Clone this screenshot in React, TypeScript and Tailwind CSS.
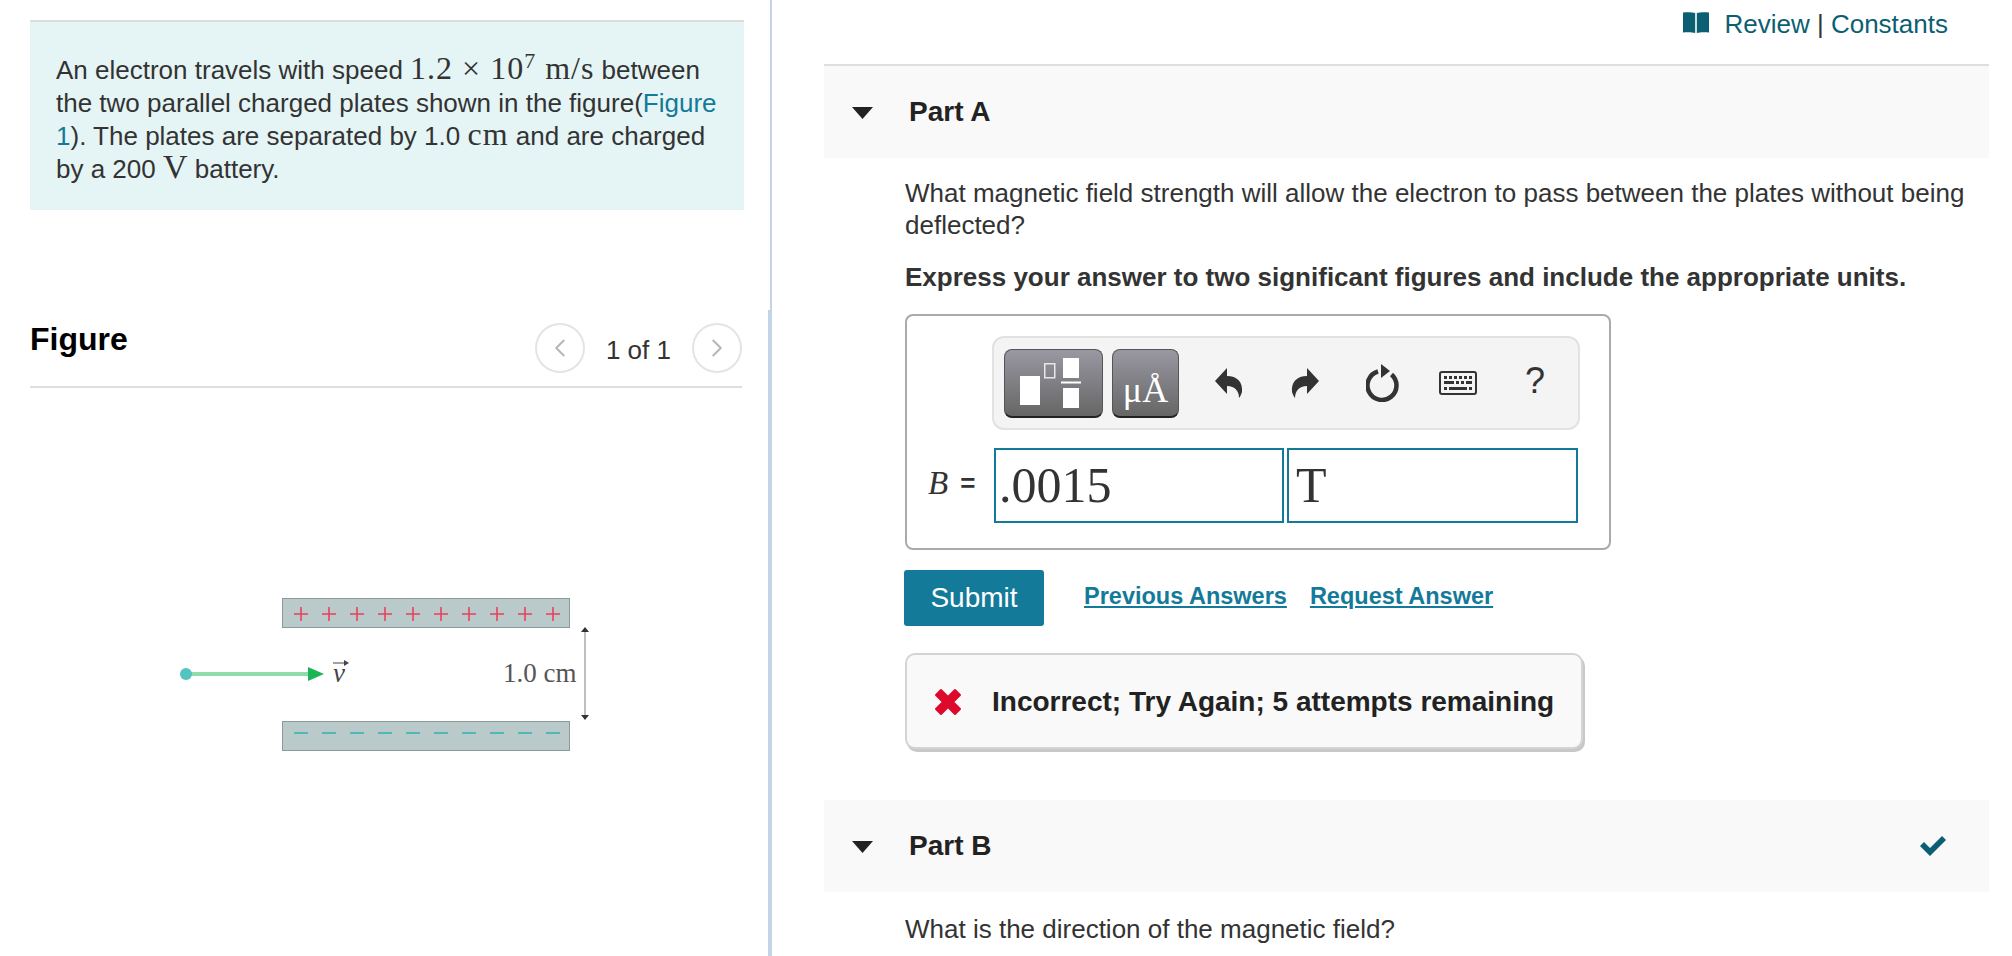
import React from "react";
import { ChevronLeft, ChevronRight } from "lucide-react";

const sans = "font-['Liberation_Sans',Arial,sans-serif]";

const Triangle = () => (
  <svg width="21" height="12" viewBox="0 0 21 12" className="mt-px shrink-0">
    <path d="M0 0H21L10.5 12Z" fill="#222" />
  </svg>
);

// drawing of the two charged plates
const PlatesFigure = () => (
  <svg width="480" height="200" viewBox="0 0 480 200" className="block">
    <defs>
      <filter id="soft">
        <feGaussianBlur stdDeviation="0.45" />
      </filter>
    </defs>
    <g filter="url(#soft)">
      <rect x="132.5" y="28.5" width="287" height="29" fill="#bacaca" stroke="#8a9a9a" />
      <rect x="132.5" y="151.5" width="287" height="29" fill="#bacaca" stroke="#8a9a9a" />
      {[0, 1, 2, 3, 4, 5, 6, 7, 8, 9].map((i) => (
        <g key={i}>
          <path
            d={`M${144 + i * 28} 44h14M${151 + i * 28} 37v14`}
            stroke="#e8405c"
            strokeWidth="1.6"
          />
          <path d={`M${144 + i * 28} 163h14`} stroke="#35b5b0" strokeWidth="1.6" />
        </g>
      ))}
      <path d="M36 104H160" stroke="#8fdcaa" strokeWidth="4" />
      <path d="M158 97l16 7-16 7z" fill="#1fb556" />
      <circle cx="36" cy="104" r="6" fill="#52c4be" />
      <path d="M183 93H197" stroke="#444" strokeWidth="1" />
      <path d="M194 90l5 3-5 3z" fill="#444" />
      <path d="M435 60V147" stroke="#aaa" strokeWidth="1.5" />
      <path d="M431 62l4-5 4 5zM431 145l4 5 4-5z" fill="#333" />
    </g>
  </svg>
);

export default function App() {
  return (
    <div className={`flex h-[956px] w-full overflow-hidden bg-white text-[26px] text-[#333] ${sans}`}>
      {/* Left panel */}
      <div className="relative w-[772px] shrink-0 border-r-2 border-[#c3d4e6] pl-[30px] pr-[26px] pt-5">
        <div className="absolute -right-[2px] bottom-0 top-[310px] w-1 bg-[#c3d4e6]" />
        <div className="h-[190px] border-t-2 border-[#dedede] bg-[#e5f5f5] px-[26px] pb-[25px] pt-[32px] leading-[33px]">
          An electron travels with speed{" "}
          <span className="font-['Liberation_Serif',serif] text-[32px] leading-[0] tracking-[1px]">
            1.2 × 10<sup className="text-[22px] leading-[0]">7</sup> m/s
          </span>{" "}
          between the two parallel charged plates shown in the figure(
          <a className="text-[#147a99]">Figure 1</a>). The plates are separated by 1.0{" "}
          <span className="font-['Liberation_Serif',serif] text-[32px] leading-[0] tracking-[1px]">cm</span> and are charged by a 200{" "}
          <span className="font-['Liberation_Serif',serif] text-[34px] leading-[0]">V</span> battery.
        </div>

        <div className="mr-[2px] mt-[112px] flex h-[66px] items-start justify-between border-b-2 border-[#dedede]">
          <h2 className="text-[32px] font-bold leading-[34px] text-black">Figure</h2>
          <div className="mt-[1px] flex items-center">
            <div className="flex h-[50px] w-[50px] items-center justify-center rounded-full border-2 border-[#e4e4e4] text-[#b5b5b5]">
              <ChevronLeft size={30} strokeWidth={1.5} />
            </div>
            <span className="mx-[21px] mt-1">1 of 1</span>
            <div className="flex h-[50px] w-[50px] items-center justify-center rounded-full border-2 border-[#e4e4e4] text-[#b5b5b5]">
              <ChevronRight size={30} strokeWidth={1.5} />
            </div>
          </div>
        </div>

        <div className="relative ml-[120px] mt-[182px] h-[200px] w-[480px]">
          <PlatesFigure />
          <span className="absolute left-[183px] top-[90px] font-['Liberation_Serif',serif] text-[27px] italic leading-none text-[#444]">
            v
          </span>
          <span className="absolute left-[353px] top-[90px] font-['Liberation_Serif',serif] text-[27px] leading-none text-[#555]">
            1.0 cm
          </span>
        </div>
      </div>

      {/* Right panel */}
      <div className="min-w-0 flex-1 pl-[52px] pr-[23px]">
        <div className="flex h-[66px] items-start justify-end border-b-2 border-[#dedede] pr-[41px] pt-[5px] text-[#0b5f73]">
          <svg width="26" height="21" viewBox="0 0 26 21" className="mr-[15px] mt-[7px]">
            <path d="M0 0.5C4 0 9 0 12.2 1V21C9 20 4 20 0 20.5ZM13.8 1C17 0 22 0 26 0.5V20.5C22 20 17 20 13.8 21Z" fill="#0b5f73" />
          </svg>
          <span>
            Review <span className="text-[#333]">|</span> Constants
          </span>
        </div>

        <div className="flex h-[92px] items-center bg-[#f9f9f9] pl-7 text-[28px] font-bold text-[#222]">
          <Triangle />
          <span className="ml-9">Part A</span>
        </div>

        <div className="pl-[81px]">
          <p className="mt-[19px] leading-[32px]">
            What magnetic field strength will allow the electron to pass between the plates without being deflected?
          </p>
          <p className="mt-5 font-bold leading-[32px]">
            Express your answer to two significant figures and include the appropriate units.
          </p>

          {/* Answer box */}
          <div className="mt-[21px] h-[236px] w-[706px] rounded-lg border-2 border-[#aaaaaa] pl-[85px] pt-5">
            <div className="flex h-[94px] w-[588px] items-center rounded-xl border-2 border-[#e2e2e2] bg-[#f4f4f4] pl-[10px]">
              <div className="flex h-[69px] w-[99px] items-center justify-center rounded-lg border border-[#555] border-b-2 border-b-[#222] bg-gradient-to-b from-[#9a98a2] to-[#666]">
                <svg width="61" height="50" viewBox="0 0 61 50" className="mr-[6px]">
                  <path d="M0 18H20V47H0ZM43 0H59V20H43ZM43 30H59V50H43ZM41 23.5H61V25.5H41Z" fill="#fff" />
                  <rect x="24.75" y="5.75" width="10" height="14" fill="none" stroke="#e8e8e8" strokeWidth="1.5" />
                </svg>
              </div>
              <div className="ml-[9px] flex h-[69px] w-[67px] items-end justify-center rounded-lg border border-[#555] border-b-2 border-b-[#222] bg-gradient-to-b from-[#9a98a2] to-[#666] pb-2 font-['Liberation_Serif',serif] text-[36px] leading-none text-white">
                μÅ
              </div>
              <svg width="28" height="30" viewBox="0 0 28 30" className="ml-[36px]">
                <path d="M12 0V8C22 8 28 14 27 24C26 27 25 29 24 30C24 23 20 18 12 18V26L0 13Z" fill="#333" />
              </svg>
              <svg width="28" height="30" viewBox="0 0 28 30" className="ml-[48px]">
                <path d="M16 0V8C6 8 0 14 1 24C2 27 3 29 4 30C4 23 8 18 16 18V26L28 13Z" fill="#333" />
              </svg>
              <svg width="34" height="38" viewBox="0 0 34 38" className="ml-[47px]">
                <path d="M25.5 10.5A14.5 14.5 0 1 1 12 7.5" fill="none" stroke="#333" strokeWidth="4.5" />
                <path d="M15 0L24 7L15 14Z" fill="#333" />
              </svg>
              <svg width="38" height="24" viewBox="0 0 38 24" className="ml-[39px]">
                <rect x="1" y="1" width="36" height="22" rx="2" fill="none" stroke="#333" strokeWidth="2" />
                <path d="M5 5h3v3H5zM10 5h3v3h-3zM15 5h3v3h-3zM20 5h3v3h-3zM25 5h3v3h-3zM30 5h3v3h-3zM5 10h10v3H5zM17 10h3v3h-3zM22 10h3v3h-3zM27 10h6v3h-6zM5 16h3v3H5zM10 16h18v3H10zM30 16h3v3h-3z" fill="#333" />
              </svg>
              <span className="mb-1 ml-[48px] text-[36px] leading-none">?</span>
            </div>

            <div className="relative ml-[2px] mt-[18px] flex h-[75px] gap-[3px] font-['Liberation_Serif',serif] text-[50px] leading-[71px]">
              <span className="absolute -left-[66px] top-0 flex items-center text-[33px] italic">
                B<span className={`${sans} ml-3 text-[26px] font-bold not-italic`}>=</span>
              </span>
              <div className="h-full w-[290px] border-2 border-[#147a99] pl-[3px]">.0015</div>
              <div className="h-full w-[291px] border-2 border-[#147a99] pl-[7px]">T</div>
            </div>
          </div>

          <div className="mt-5 flex items-start font-bold">
            <button className="-ml-px h-14 w-[140px] rounded-[3px] bg-[#147a99] text-[28px] font-normal text-white">Submit</button>
            <a className="ml-10 mt-[9px] text-[23.5px] text-[#147a99] underline">Previous Answers</a>
            <a className="ml-[23px] mt-[9px] text-[23.5px] text-[#147a99] underline">Request Answer</a>
          </div>

          <div className="mt-[27px] flex h-[96px] w-[678px] items-center rounded-[10px] border-2 border-[#d4d4d4] bg-[#f9f9f9] pl-[26px] shadow-[2px_3px_0_#c8c8c8]">
            <svg width="30" height="30" viewBox="0 0 30 30" className="mt-[2px] shrink-0">
              <path d="M3 8L8 3L15 10L22 3L27 8L20 15L27 22L22 27L15 20L8 27L3 22L10 15Z" fill="#dd0a2c" stroke="#dd0a2c" strokeWidth="2" strokeLinejoin="round" />
            </svg>
            <span className="ml-[29px] mt-[2px] text-[28px] font-bold text-[#222]">Incorrect; Try Again; 5 attempts remaining</span>
          </div>
        </div>

        <div className="mt-[51px] flex h-[92px] items-center bg-[#f9f9f9] pl-7 pr-[43px] text-[28px] font-bold text-[#222]">
          <Triangle />
          <span className="ml-9 flex-1">Part B</span>
          <svg width="26" height="20" viewBox="0 0 26 20">
            <path d="M0 10L4 6L10 12L22 0L26 4L10 20Z" fill="#0b5f73" />
          </svg>
        </div>

        <p className="mt-[21px] pl-[81px] leading-[32px]">What is the direction of the magnetic field?</p>
      </div>
    </div>
  );
}
